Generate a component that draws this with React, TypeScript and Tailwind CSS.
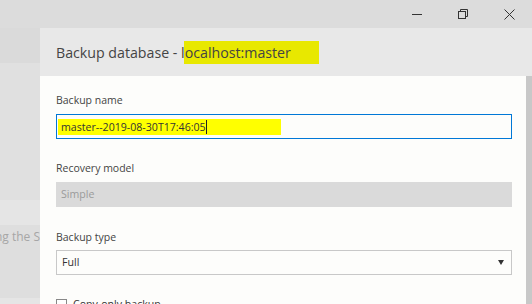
import React from "react";

export default function App() {
  const font = { fontFamily: '"Segoe UI", "Open Sans", "Noto Sans", sans-serif' };
  return (
    <div className="w-[532px] h-[304px] overflow-hidden flex flex-col bg-[#dcdcdc]" style={font}>
      {/* title bar */}
      <div className="h-[28px] flex justify-end items-center shrink-0">
        <div className="w-[46px] h-[28px] flex items-center justify-center">
          <svg width="10" height="10" viewBox="0 0 10 10"><path d="M0 5.5H10" stroke="#333" strokeWidth="1" /></svg>
        </div>
        <div className="w-[46px] h-[28px] flex items-center justify-center">
          <svg width="10" height="10" viewBox="0 0 10 10" fill="none" stroke="#333" strokeWidth="1">
            <rect x="0.5" y="2.5" width="7" height="7" />
            <path d="M2.5 2.5V0.5H9.5V7.5H7.5" />
          </svg>
        </div>
        <div className="w-[46px] h-[28px] flex items-center justify-center">
          <svg width="11" height="11" viewBox="0 0 11 11" stroke="#333" strokeWidth="1">
            <path d="M0.5 0.5L10.5 10.5M10.5 0.5L0.5 10.5" />
          </svg>
        </div>
      </div>
      <div className="flex flex-1 min-h-0">
        {/* left strip */}
        <div className="w-[40px] shrink-0 flex flex-col">
          <div className="h-[35px] shrink-0 bg-[#dadada]" />
          <div className="h-[137px] shrink-0 bg-[#e0e0e0]" />
          <div className="h-[25px] shrink-0 bg-[#e5e5e5]" />
          <div className="h-[73px] shrink-0 bg-[#dedede] flex justify-end items-start overflow-hidden whitespace-nowrap text-[12px] leading-[16px] text-[#a6a6a6] pt-[4px]">
            ing the S
          </div>
          <div className="flex-1 bg-[#e5e5e5]" />
        </div>
        {/* dialog */}
        <div className="flex-1 flex flex-col min-w-0">
          <div className="h-[48px] bg-[#e8e8e8] flex items-center pl-[16px] pt-[1px] shrink-0">
            <span className="text-[14.2px] text-[#444] whitespace-nowrap">
              Backup database - l<span className="bg-[#e8e800] pr-[28px] -ml-[1px] pl-[1px] py-[2px]">ocalhost:master</span>
            </span>
          </div>
          <div className="flex flex-1 min-h-0 overflow-hidden">
            <div className="flex-1 bg-[#fdfdfb] pl-[16px] pr-[14px] pt-[16px] flex flex-col text-[10.5px] text-[#444]">
              <div className="h-[16px] shrink-0 leading-[16px]">Backup name</div>
              <div className="mt-[6px] h-[25px] shrink-0 border border-[#0078d7] flex items-center pl-[1px]">
                <span className="bg-[#ffff00] text-[#333] text-[10.6px] pl-[3px] pr-[74px] leading-[16px] flex items-center">
                  <span>master--2019-08-30T17:46:05</span>
                  <span className="w-px h-[14px] bg-[#222]" />
                </span>
              </div>
              <div className="mt-[21px] h-[16px] shrink-0 leading-[16px]">Recovery model</div>
              <div className="mt-[6px] h-[25px] shrink-0 bg-[#dadada] flex items-center pl-[5px] text-[#9a9a9a] text-[10.6px]">Simple</div>
              <div className="mt-[22px] h-[16px] shrink-0 leading-[16px]">Backup type</div>
              <div className="mt-[5px] h-[25px] shrink-0 border border-[#c8c8c8] flex items-center pl-[5px] pr-[7px] text-[#333] text-[10.6px]">
                <span className="flex-1">Full</span>
                <svg width="6" height="5" viewBox="0 0 6 5"><path d="M0 0H6L3 5Z" fill="#333" /></svg>
              </div>
              <div className="mt-[22px] shrink-0 flex items-center gap-[6px]">
                <div className="w-[11px] h-[11px] border border-[#888] bg-white" />
                <span className="text-[10.6px] text-[#333]">Copy-only backup</span>
              </div>
            </div>
            <div className="w-[6px] bg-[#c8c8c8] shrink-0" />
          </div>
        </div>
      </div>
    </div>
  );
}
